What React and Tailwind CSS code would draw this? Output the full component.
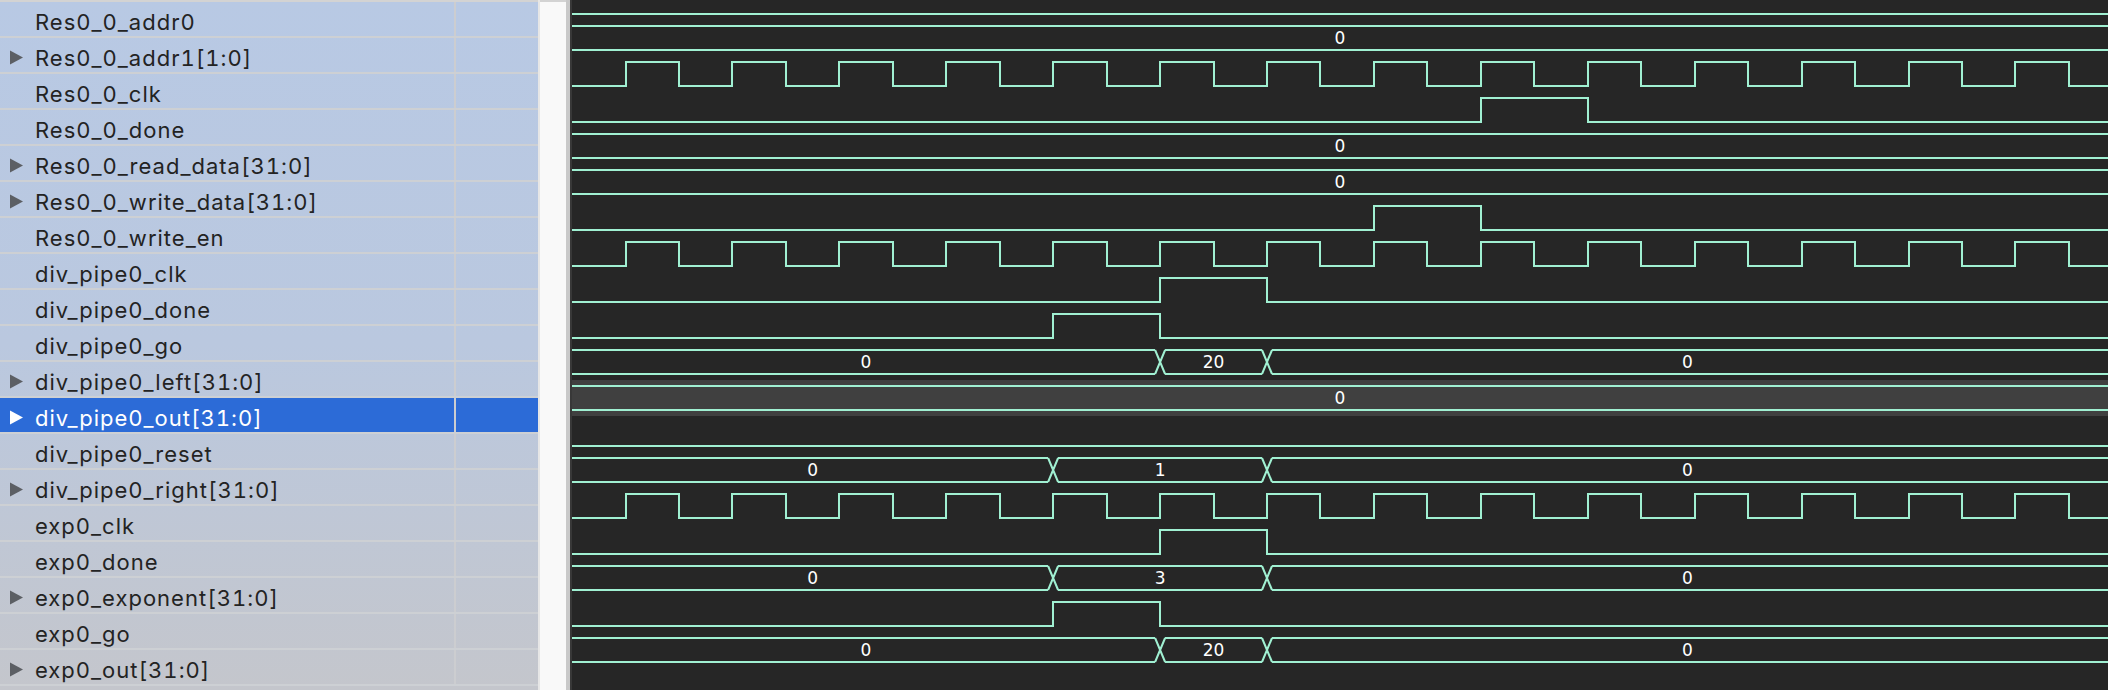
import React from "react";

const rows = [
  { name: "Res0_0_addr0", bus: false },
  { name: "Res0_0_addr1[1:0]", bus: true },
  { name: "Res0_0_clk", bus: false },
  { name: "Res0_0_done", bus: false },
  { name: "Res0_0_read_data[31:0]", bus: true },
  { name: "Res0_0_write_data[31:0]", bus: true },
  { name: "Res0_0_write_en", bus: false },
  { name: "div_pipe0_clk", bus: false },
  { name: "div_pipe0_done", bus: false },
  { name: "div_pipe0_go", bus: false },
  { name: "div_pipe0_left[31:0]", bus: true },
  { name: "div_pipe0_out[31:0]", bus: true, selected: true },
  { name: "div_pipe0_reset", bus: false },
  { name: "div_pipe0_right[31:0]", bus: true },
  { name: "exp0_clk", bus: false },
  { name: "exp0_done", bus: false },
  { name: "exp0_exponent[31:0]", bus: true },
  { name: "exp0_go", bus: false },
  { name: "exp0_out[31:0]", bus: true },
];

const waves = [
  { type: "low" },
  { type: "bus", segs: [[0, "0"]] },
  { type: "clk" },
  { type: "pulse", a: 17, b: 19 },
  { type: "bus", segs: [[0, "0"]] },
  { type: "bus", segs: [[0, "0"]] },
  { type: "pulse", a: 15, b: 17 },
  { type: "clk" },
  { type: "pulse", a: 11, b: 13 },
  { type: "pulse", a: 9, b: 11 },
  { type: "bus", segs: [[0, "0"], [11, "20"], [13, "0"]] },
  { type: "bus", segs: [[0, "0"]] },
  { type: "low" },
  { type: "bus", segs: [[0, "0"], [9, "1"], [13, "0"]] },
  { type: "clk" },
  { type: "pulse", a: 11, b: 13 },
  { type: "bus", segs: [[0, "0"], [9, "3"], [13, "0"]] },
  { type: "pulse", a: 9, b: 11 },
  { type: "bus", segs: [[0, "0"], [11, "20"], [13, "0"]] },
];

const H = 53.46;
const W = 1536;
const STROKE = "#a0f0d2";

function Triangle({ white }) {
  return (
    <svg width="15" height="15" viewBox="0 0 15 15" className="shrink-0">
      <polygon points="1,0.5 14,7.5 1,14.5" fill={white ? "#ffffff" : "#5c5f64"} />
    </svg>
  );
}

function Wave({ w, i }) {
  const hi = 36 * i - 10;
  const lo = 36 * i + 14;
  const mid = 36 * i + 2;
  if (w.type === "low") {
    return <path d={`M0 ${lo} H${W}`} stroke={STROKE} strokeWidth="2" fill="none" shapeRendering="crispEdges" />;
  }
  if (w.type === "clk") {
    let d = `M0 ${lo}`;
    for (let k = 1; k * H < W; k++) {
      d += ` H${(k * H).toFixed(1)} V${k % 2 === 1 ? hi : lo}`;
    }
    d += ` H${W}`;
    return <path d={d} stroke={STROKE} strokeWidth="2" fill="none" shapeRendering="crispEdges" />;
  }
  if (w.type === "pulse") {
    const d = `M0 ${lo} H${(w.a * H).toFixed(1)} V${hi} H${(w.b * H).toFixed(1)} V${lo} H${W}`;
    return <path d={d} stroke={STROKE} strokeWidth="2" fill="none" shapeRendering="crispEdges" />;
  }
  const segs = w.segs;
  const xs = segs.map((s) => s[0] * H);
  let dh = "";
  let dx = "";
  const labels = [];
  segs.forEach((s, j) => {
    const start = xs[j];
    const end = j === segs.length - 1 ? W : xs[j + 1];
    const sx = j === 0 ? 0 : start + 5;
    const ex = j === segs.length - 1 ? W : end - 5;
    dh += ` M${sx.toFixed(1)} ${hi} H${ex.toFixed(1)} M${sx.toFixed(1)} ${lo} H${ex.toFixed(1)}`;
    if (j > 0) {
      dx += ` M${(start - 5).toFixed(1)} ${hi} L${(start + 5).toFixed(1)} ${lo} M${(start - 5).toFixed(1)} ${lo} L${(start + 5).toFixed(1)} ${hi}`;
    }
    labels.push(
      <text
        key={j}
        x={(start + end) / 2}
        y={mid}
        textAnchor="middle"
        dominantBaseline="central"
        fill="#ffffff"
        fontSize="17"
        fontFamily="'DejaVu Sans', sans-serif"
      >
        {s[1]}
      </text>
    );
  });
  return (
    <g>
      <path d={dh} stroke={STROKE} strokeWidth="2" fill="none" shapeRendering="crispEdges" />
      {dx && <path d={dx} stroke={STROKE} strokeWidth="2" fill="none" />}
      {labels}
    </g>
  );
}

export default function App() {
  return (
    <div className="flex h-[690px] w-[2108px] overflow-hidden bg-[#262626]">
      <div className="flex w-[538px] shrink-0 flex-col bg-gradient-to-b from-[#b8c9e4] via-[#bac8df] to-[#c4c6cc]">
        <div className="h-[2px] shrink-0 bg-[#d3d3d3]" />
        {rows.map((r) => (
          <div
            key={r.name}
            className={`flex h-[36px] shrink-0 border-b-2 border-[#cdd0d4] ${r.selected ? "bg-[#2c6bd7]" : ""}`}
          >
            <div className="flex w-[454px] items-center pl-[9px] pt-[5px]">
              {r.bus ? <Triangle white={r.selected} /> : <div className="w-[15px] shrink-0" />}
              <span
                className={`ml-[11px] whitespace-nowrap text-[22px] leading-none tracking-[1px] tabular-nums ${r.selected ? "text-white" : "text-[#232323]"}`}
                style={{ fontFamily: "Inter, 'Liberation Sans', sans-serif" }}
              >
                {r.name}
              </span>
            </div>
            <div className="w-[2px] shrink-0 bg-[#cccdd0]" />
            <div className="flex-1" />
          </div>
        ))}
      </div>
      <div className="flex w-[34px] shrink-0">
        <div className="w-[2px] bg-[#e6e6e6]" />
        <div className="flex w-[26px] flex-col bg-[#f9f9f9]">
          <div className="h-[2px] bg-[#d3d3d3]" />
        </div>
        <div className="w-[4px] bg-[#c9c9c9]" />
        <div className="w-[2px] bg-[#383838]" />
      </div>
      <div className="flex-1">
        <svg width={W} height="690" viewBox={`0 0 ${W} 690`} className="block">
          <rect x="0" y={36 * 11 - 16} width={W} height="36" fill="#404040" />
          {waves.map((w, i) => (
            <Wave key={i} w={w} i={i} />
          ))}
        </svg>
      </div>
    </div>
  );
}
